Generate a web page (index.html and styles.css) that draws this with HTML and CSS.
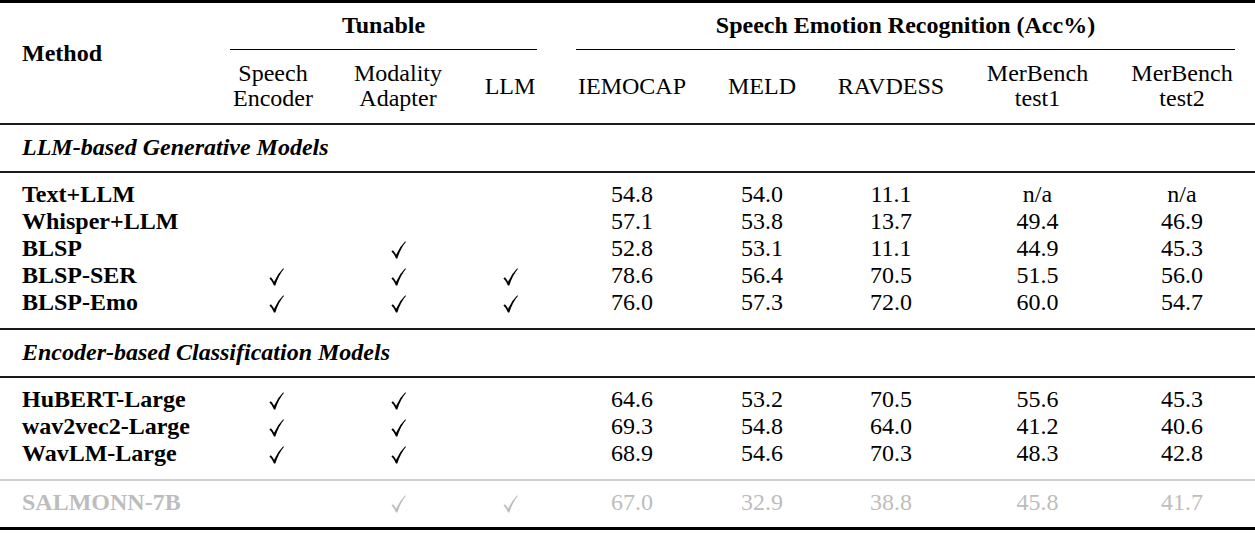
FILE: index.html
```html
<!DOCTYPE html>
<html lang="en">
<head>
<meta charset="utf-8">
<title>Speech Emotion Recognition results</title>
<link rel="stylesheet" href="styles.css">
</head>
<body>
<svg class="defs" width="0" height="0" aria-hidden="true">
  <defs>
    <symbol id="ck" viewBox="0 0 14 17">
      <path d="M0.3 9.9 L1.7 8.7 Q3.4 10.3 4.7 12.9 Q8 5.4 13.4 0.2 L14 0.9 Q9 6.6 5.9 16.6 L4.6 16.6 Q3 12 0.3 9.9 Z" fill="currentColor"/>
    </symbol>
  </defs>
</svg>
<table class="results">
  <colgroup>
    <col class="c-method">
    <col class="c-se">
    <col class="c-ma">
    <col class="c-llm">
    <col class="c-iem">
    <col class="c-meld">
    <col class="c-rav">
    <col class="c-t1">
    <col class="c-t2">
  </colgroup>
  <thead>
    <tr class="head-top">
      <th rowspan="2" class="method">Method</th>
      <th colspan="3" class="group"><div class="cmid cmid-tune">Tunable</div></th>
      <th colspan="5" class="group"><div class="cmid cmid-ser">Speech Emotion Recognition (Acc%)</div></th>
    </tr>
    <tr class="head-sub">
      <th>Speech<br>Encoder</th>
      <th>Modality<br>Adapter</th>
      <th>LLM</th>
      <th>IEMOCAP</th>
      <th>MELD</th>
      <th>RAVDESS</th>
      <th>MerBench<br>test1</th>
      <th>MerBench<br>test2</th>
    </tr>
  </thead>
  <tbody>
    <tr class="section"><td colspan="9">LLM-based Generative Models</td></tr>
    <tr class="first">
      <td class="name">Text+LLM</td><td></td><td></td><td></td>
      <td>54.8</td><td>54.0</td><td>11.1</td><td>n/a</td><td>n/a</td>
    </tr>
    <tr>
      <td class="name">Whisper+LLM</td><td></td><td></td><td></td>
      <td>57.1</td><td>53.8</td><td>13.7</td><td>49.4</td><td>46.9</td>
    </tr>
    <tr>
      <td class="name">BLSP</td><td></td><td><svg class="check"><use href="#ck"/></svg></td><td></td>
      <td>52.8</td><td>53.1</td><td>11.1</td><td>44.9</td><td>45.3</td>
    </tr>
    <tr>
      <td class="name">BLSP-SER</td><td class="se"><svg class="check"><use href="#ck"/></svg></td><td><svg class="check"><use href="#ck"/></svg></td><td><svg class="check"><use href="#ck"/></svg></td>
      <td>78.6</td><td>56.4</td><td>70.5</td><td>51.5</td><td>56.0</td>
    </tr>
    <tr class="last">
      <td class="name">BLSP-Emo</td><td class="se"><svg class="check"><use href="#ck"/></svg></td><td><svg class="check"><use href="#ck"/></svg></td><td><svg class="check"><use href="#ck"/></svg></td>
      <td>76.0</td><td>57.3</td><td>72.0</td><td>60.0</td><td>54.7</td>
    </tr>
    <tr class="section"><td colspan="9">Encoder-based Classification Models</td></tr>
    <tr class="first">
      <td class="name">HuBERT-Large</td><td class="se"><svg class="check"><use href="#ck"/></svg></td><td><svg class="check"><use href="#ck"/></svg></td><td></td>
      <td>64.6</td><td>53.2</td><td>70.5</td><td>55.6</td><td>45.3</td>
    </tr>
    <tr>
      <td class="name">wav2vec2-Large</td><td class="se"><svg class="check"><use href="#ck"/></svg></td><td><svg class="check"><use href="#ck"/></svg></td><td></td>
      <td>69.3</td><td>54.8</td><td>64.0</td><td>41.2</td><td>40.6</td>
    </tr>
    <tr class="last">
      <td class="name">WavLM-Large</td><td class="se"><svg class="check"><use href="#ck"/></svg></td><td><svg class="check"><use href="#ck"/></svg></td><td></td>
      <td>68.9</td><td>54.6</td><td>70.3</td><td>48.3</td><td>42.8</td>
    </tr>
    <tr class="muted">
      <td class="name">SALMONN-7B</td><td></td><td><svg class="check"><use href="#ck"/></svg></td><td><svg class="check"><use href="#ck"/></svg></td>
      <td>67.0</td><td>32.9</td><td>38.8</td><td>45.8</td><td>41.7</td>
    </tr>
  </tbody>
</table>
</body>
</html>
```

FILE: styles.css
```css
html, body {
  margin: 0;
  padding: 0;
  background: #ffffff;
}

body {
  font-family: "Liberation Serif", "Times New Roman", serif;
  font-size: 24px;
  color: #000000;
}

.defs {
  position: absolute;
  width: 0;
  height: 0;
  overflow: hidden;
}

.results {
  width: 1255px;
  table-layout: fixed;
  border-collapse: separate;
  border-spacing: 0;
  line-height: 27px;
}

.c-method { width: 214px; }
.c-se { width: 118px; }
.c-ma { width: 132px; }
.c-llm { width: 92px; }
.c-iem { width: 152px; }
.c-meld { width: 108px; }
.c-rav { width: 150px; }
.c-t1 { width: 143px; }
.c-t2 { width: 146px; }

.results th,
.results td {
  padding: 0;
  text-align: center;
  vertical-align: middle;
}

/* header */
.head-top th {
  border-top: 3px solid #000000;
  font-weight: bold;
}

.head-top .group {
  padding-top: 9px;
  vertical-align: top;
}

.cmid {
  padding-bottom: 10px;
  border-bottom: 1px solid #000000;
}

.cmid-tune {
  margin: 0 19px 0 16px;
}

.cmid-ser {
  margin: 0 20px 0 20px;
}

.head-top .method {
  text-align: left;
  vertical-align: top;
  padding: 37px 0 0 22px;
}

.head-sub th {
  font-weight: normal;
  line-height: 25px;
  padding: 11px 0 12px;
}

/* section titles */
.section td {
  border-top: 2px solid #1a1a1a;
  text-align: left;
  padding: 9px 0 10px 22px;
  font-weight: bold;
  font-style: italic;
}

/* data rows */
.results td.name {
  text-align: left;
  padding-left: 22px;
  font-weight: bold;
}

.results td.se {
  padding-left: 6px;
}

.first td {
  border-top: 2px solid #1a1a1a;
  padding-top: 8px;
}

.last td {
  padding-bottom: 12px;
}

.muted td {
  color: #bdbdbd;
  border-top: 2px solid #cfcfcf;
  border-bottom: 3px solid #000000;
  padding-top: 8px;
  padding-bottom: 11px;
}

.check {
  display: inline-block;
  width: 15px;
  height: 18px;
  vertical-align: -3px;
  color: inherit;
}
```
